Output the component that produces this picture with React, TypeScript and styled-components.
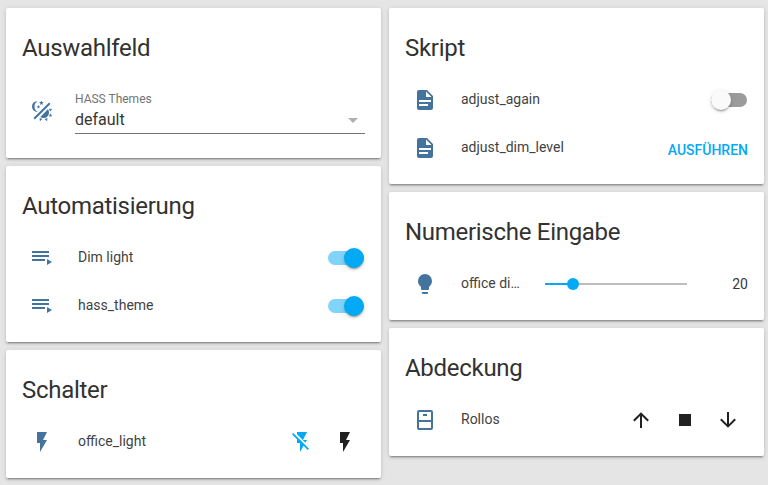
import React from 'react';
import styled, { createGlobalStyle } from 'styled-components';

const icons: { [key: string]: string } = {
  theme: 'M7.5,2C5.71,3.15 4.5,5.18 4.5,7.5C4.5,9.82 5.71,11.85 7.53,13C4.46,13 2,10.54 2,7.5A5.5,5.5 0 0,1 7.5,2M19.07,3.5L20.5,4.93L4.93,20.5L3.5,19.07L19.07,3.5M12.89,5.93L11.41,5L9.97,6L10.39,4.3L9,3.24L10.75,3.12L11.33,1.47L12,3.1L13.73,3.13L12.38,4.26L12.89,5.93M9.59,9.54L8.43,8.81L7.31,9.59L7.65,8.27L6.56,7.44L7.92,7.35L8.37,6.06L8.88,7.33L10.24,7.35L9.19,8.23L9.59,9.54M19,13.5A5.5,5.5 0 0,1 13.5,19C12.28,19 11.15,18.6 10.24,17.93L17.93,10.24C18.6,11.15 19,12.28 19,13.5M14.6,20.08L17.37,18.93L17.13,22.28L14.6,20.08M18.93,17.38L20.08,14.61L22.28,17.15L18.93,17.38M20.08,12.42L18.94,9.64L22.28,9.88L20.08,12.42M9.63,18.93L12.4,20.08L9.87,22.27L9.63,18.93Z',
  playlist: 'M19,9H2V11H19V9M19,5H2V7H19V5M2,15H15V13H2V15M17,13V19L22,16L17,13Z',
  flash: 'M7,2V13H10V22L17,10H13L17,2H7Z',
  flashOff: 'M17,10H13L17,2H7V4.18L15.46,12.64M3.27,3L2,4.27L7,9.27V13H10V22L13.58,15.86L17.73,20L19,18.73L3.27,3Z',
  file: 'M13,9H18.5L13,3.5V9M6,2H14L20,8V20A2,2 0 0,1 18,22H6C4.89,22 4,21.1 4,20V4C4,2.89 4.89,2 6,2M15,18V16H6V18H15M18,14V12H6V14H18Z',
  bulb: 'M12,2A7,7 0 0,0 5,9C5,11.38 6.19,13.47 8,14.74V17A1,1 0 0,0 9,18H15A1,1 0 0,0 16,17V14.74C17.81,13.47 19,11.38 19,9A7,7 0 0,0 12,2M9,21A1,1 0 0,0 10,22H14A1,1 0 0,0 15,21V20H9V21Z',
  cover: 'M6,2H18A2,2 0 0,1 20,4V20A2,2 0 0,1 18,22H6A2,2 0 0,1 4,20V4A2,2 0 0,1 6,2ZM6,4V12H18V4H6ZM6,14V20H18V14H6ZM10,6H14V8H10V6Z',
  up: 'M13,20H11V8L5.5,13.5L4.08,12.08L12,4.16L19.92,12.08L18.5,13.5L13,8V20Z',
  stop: 'M18,18H6V6H18V18Z',
  down: 'M11,4H13V16L18.5,10.5L19.92,11.92L12,19.84L4.08,11.92L5.5,10.5L11,16V4Z',
};

const GlobalStyle = createGlobalStyle`
  html, body {
    margin: 0;
    padding: 0;
    background: #e5e5e5;
    font-family: Roboto, sans-serif;
  }
`;

const Page = styled.div`
  display: grid;
  grid-template-columns: 375px 375px;
  column-gap: 8px;
  width: 768px;
  height: 485px;
  padding: 8px 0 0 6px;
  box-sizing: border-box;
  overflow: hidden;
`;

const Column = styled.div`
  display: flex;
  flex-direction: column;
  gap: 8px;
`;

const Card = styled.div`
  background: #fff;
  border-radius: 2px;
  box-shadow: 0 2px 2px 0 rgba(0, 0, 0, 0.14), 0 1px 5px 0 rgba(0, 0, 0, 0.12), 0 3px 1px -2px rgba(0, 0, 0, 0.2);
`;

const Title = styled.div`
  padding: 24px 16px 16px;
  font-size: 24px;
  line-height: 32px;
  letter-spacing: -0.012em;
  color: #212121;
  opacity: 0.92;
`;

const Content = styled.div`
  display: flex;
  flex-direction: column;
  gap: 8px;
  padding: 0 16px 16px;
`;

const Row = styled.div`
  display: flex;
  align-items: center;
  height: 40px;
`;

const SelectRow = styled.div`
  display: flex;
  align-items: center;
  height: 62px;
`;

const Badge = styled.div`
  display: flex;
  align-items: center;
  justify-content: center;
  flex: none;
  width: 40px;
  height: 40px;
`;

const Icon = styled.svg<{ $color?: string }>`
  display: block;
  width: 24px;
  height: 24px;
  fill: ${(p) => p.$color || '#44739e'};
`;

const Name = styled.div<{ $width?: number }>`
  margin-left: 16px;
  padding-bottom: 2px;
  flex: ${(p) => (p.$width ? 'none' : '1')};
  width: ${(p) => (p.$width ? `${p.$width}px` : 'auto')};
  font-size: 14px;
  line-height: 20px;
  color: #212121;
  opacity: 0.85;
  white-space: nowrap;
  overflow: hidden;
  text-overflow: ellipsis;
`;

const SwitchWrap = styled.div`
  position: relative;
  flex: none;
  width: 36px;
  height: 14px;
  margin-right: 1px;
`;

const Track = styled.div<{ $on: boolean }>`
  width: 100%;
  height: 100%;
  border-radius: 7px;
  background: ${(p) => (p.$on ? 'rgba(3, 169, 244, 0.5)' : '#9b9b9b')};
`;

const Thumb = styled.div<{ $on: boolean }>`
  position: absolute;
  top: -3px;
  left: ${(p) => (p.$on ? '16px' : '0')};
  width: 20px;
  height: 20px;
  border-radius: 50%;
  background: ${(p) => (p.$on ? '#03a9f4' : '#fafafa')};
  box-shadow: 0 2px 2px 0 rgba(0, 0, 0, 0.14), 0 1px 5px 0 rgba(0, 0, 0, 0.12), 0 3px 1px -2px rgba(0, 0, 0, 0.2);
`;

const Actions = styled.div`
  display: flex;
  gap: 3.5px;
  flex: none;
`;

const IconButton = styled.div`
  display: flex;
  align-items: center;
  justify-content: center;
  width: 40px;
  height: 40px;
`;

const RunButton = styled.div`
  flex: none;
  font-size: 14px;
  font-weight: 500;
  line-height: 20px;
  color: #03a9f4;
  margin-top: 3px;
`;

const Field = styled.div`
  flex: 1;
  margin-left: 13px;
  border-bottom: 1px solid #737373;
  position: relative;
  margin-top: 3px;
  padding: 1px 0;
`;

const FieldLabel = styled.div`
  font-size: 12px;
  line-height: 15px;
  color: #737373;
`;

const FieldValue = styled.div`
  font-size: 16px;
  line-height: 24px;
  padding-top: 1px;
  color: #212121;
  opacity: 0.9;
`;

const Arrow = styled.div`
  position: absolute;
  right: 7px;
  top: 27px;
  width: 0;
  height: 0;
  border-left: 5px solid transparent;
  border-right: 5px solid transparent;
  border-top: 5px solid #b0b0b0;
`;

const Slider = styled.div`
  position: relative;
  flex: none;
  width: 142px;
  height: 2px;
  margin-left: 24px;
  background: #bdbdbd;
`;

const SliderFill = styled.div`
  height: 100%;
  background: #03a9f4;
`;

const SliderThumb = styled.div`
  position: absolute;
  top: -5px;
  width: 12px;
  height: 12px;
  margin-left: -6px;
  border-radius: 50%;
  background: #03a9f4;
`;

const Value = styled.div`
  flex: 1;
  text-align: right;
  font-size: 14px;
  color: #212121;
  opacity: 0.9;
`;

const Mdi = ({ name, color }: { name: string; color?: string }) => (
  <Icon viewBox="0 0 24 24" $color={color}>
    <path d={icons[name]} />
  </Icon>
);

const StateIcon = ({ name }: { name: string }) => (
  <Badge>
    <Mdi name={name} />
  </Badge>
);

const Toggle = ({ on }: { on: boolean }) => (
  <SwitchWrap>
    <Track $on={on} />
    <Thumb $on={on} />
  </SwitchWrap>
);

const sliderPct = 20;

export default function App() {
  return (
    <Page>
      <GlobalStyle />
      <Column>
        <Card>
          <Title>Auswahlfeld</Title>
          <Content>
            <SelectRow>
              <StateIcon name="theme" />
              <Field>
                <FieldLabel>HASS Themes</FieldLabel>
                <FieldValue>default</FieldValue>
                <Arrow />
              </Field>
            </SelectRow>
          </Content>
        </Card>
        <Card>
          <Title>Automatisierung</Title>
          <Content>
            <Row>
              <StateIcon name="playlist" />
              <Name>Dim light</Name>
              <Toggle on />
            </Row>
            <Row>
              <StateIcon name="playlist" />
              <Name>hass_theme</Name>
              <Toggle on />
            </Row>
          </Content>
        </Card>
        <Card>
          <Title>Schalter</Title>
          <Content>
            <Row>
              <StateIcon name="flash" />
              <Name>office_light</Name>
              <Actions>
                <IconButton>
                  <Mdi name="flashOff" color="#03a9f4" />
                </IconButton>
                <IconButton>
                  <Mdi name="flash" color="#212121" />
                </IconButton>
              </Actions>
            </Row>
          </Content>
        </Card>
      </Column>
      <Column>
        <Card>
          <Title>Skript</Title>
          <Content>
            <Row>
              <StateIcon name="file" />
              <Name>adjust_again</Name>
              <Toggle on={false} />
            </Row>
            <Row>
              <StateIcon name="file" />
              <Name>adjust_dim_level</Name>
              <RunButton>AUSFÜHREN</RunButton>
            </Row>
          </Content>
        </Card>
        <Card>
          <Title>Numerische Eingabe</Title>
          <Content>
            <Row>
              <StateIcon name="bulb" />
              <Name $width={60}>office dimmer</Name>
              <Slider>
                <SliderFill style={{ width: `${sliderPct}%` }} />
                <SliderThumb style={{ left: `${sliderPct}%` }} />
              </Slider>
              <Value>20</Value>
            </Row>
          </Content>
        </Card>
        <Card>
          <Title>Abdeckung</Title>
          <Content>
            <Row>
              <StateIcon name="cover" />
              <Name>Rollos</Name>
              <Actions>
                <IconButton>
                  <Mdi name="up" color="#212121" />
                </IconButton>
                <IconButton>
                  <Mdi name="stop" color="#212121" />
                </IconButton>
                <IconButton>
                  <Mdi name="down" color="#212121" />
                </IconButton>
              </Actions>
            </Row>
          </Content>
        </Card>
      </Column>
    </Page>
  );
}
